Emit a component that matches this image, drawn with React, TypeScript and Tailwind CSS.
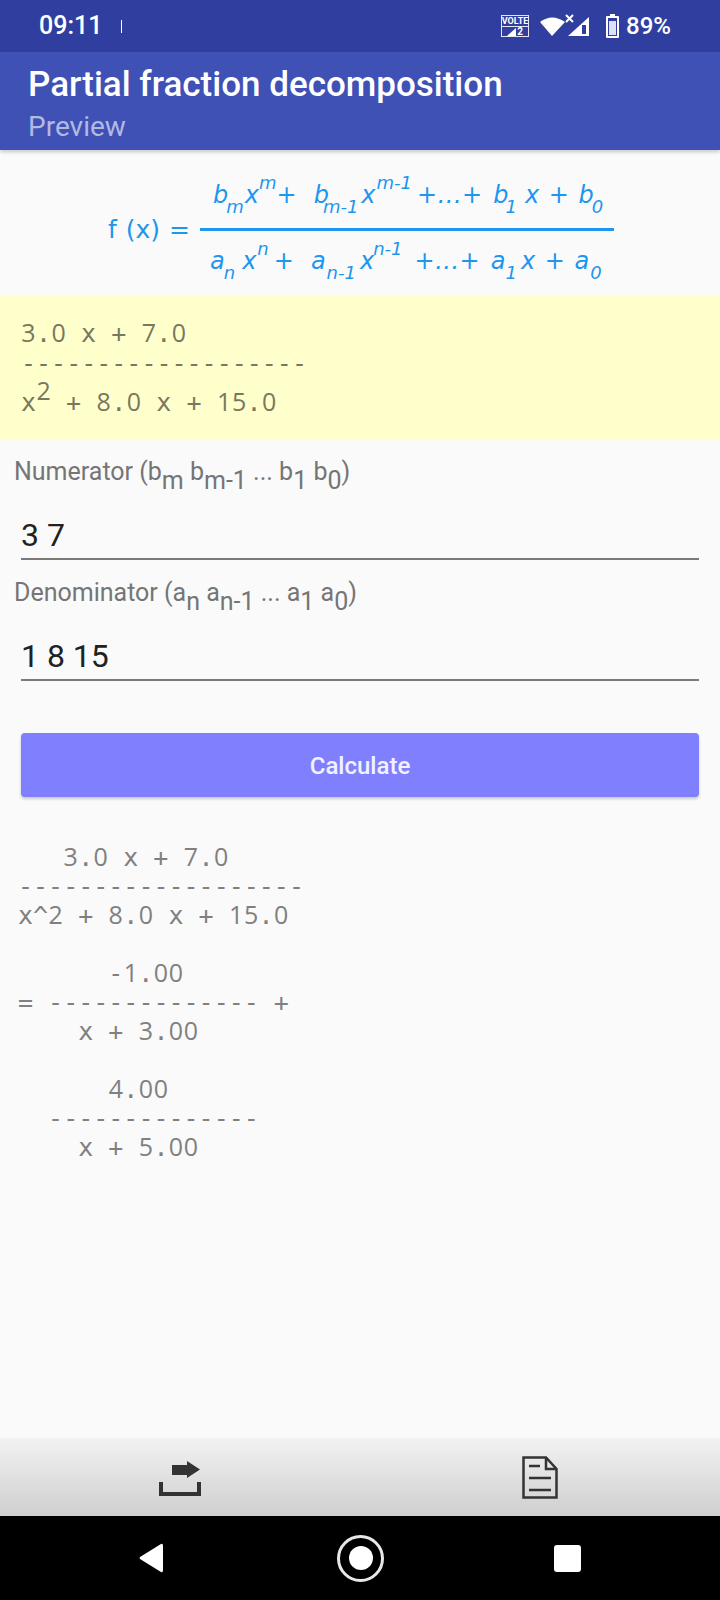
import React from "react";

const mono = "font-['DejaVu_Sans_Mono',monospace] text-[25px] leading-[29px] whitespace-pre";
const roboto = "font-['Roboto',sans-serif]";

const result = [
    "   3.0 x + 7.0",
    "-------------------",
    "x^2 + 8.0 x + 15.0",
    "",
    "      -1.00",
    "= -------------- +",
    "    x + 3.00",
    "",
    "      4.00",
    "  --------------",
    "    x + 5.00",
];

// цифры в ячейке 15px, у моноширинного шрифта ноль с точкой
const Digits = ({ text }: { text: string }) => (
    <>
        {text.split(/([0-9])/).map((part, i) =>
            /[0-9]/.test(part) ? (
                <span key={i} className="inline-block w-[15px] text-center leading-none font-['Open_Sans',sans-serif]">{part}</span>
            ) : (
                part
            )
        )}
    </>
);

const Sub = ({ children, className = "" }: { children: React.ReactNode; className?: string }) => (
    <span className={`relative top-[10px] text-[18px] ${className}`}>{children}</span>
);

const Sup = ({ children, className = "" }: { children: React.ReactNode; className?: string }) => (
    <span className={`relative -top-[14px] text-[18px] ${className}`}>{children}</span>
);

const Formula = () => (
    <div className="h-[145px] flex items-start pt-[27px] pl-[108px] text-[#1d96ee] font-['DejaVu_Sans',sans-serif]">
        <div className="w-[92px] mt-[35px] text-[25px] leading-[36px] whitespace-pre [word-spacing:1px]">f (x) =</div>
        <div className="w-[414px] flex flex-col">
            <div className="h-[36px] pl-[13px] text-[24px] italic leading-[36px] whitespace-pre [word-spacing:2px]">
                b<Sub className="ml-[-2px]">m</Sub>
                <span className="ml-[1px]">x</span><Sup>m</Sup>
                +
                <span className="ml-[17px]">b</span><Sub className="ml-[-6px]">m-1</Sub>
                <span className="ml-[3px]">x</span><Sup className="ml-[1px]">m-1</Sup>
                <span className="ml-[5px] tracking-[0.5px]">+...+</span><span className="ml-[1px]"> b</span><Sub className="ml-[-3px]">1</Sub>
                <span className="ml-[8px]">x + b</span><Sub className="ml-[-2px]">0</Sub>
            </div>
            <div className="h-[3px] mt-[15px] bg-[#1d96ee]" />
            <div className="h-[36px] mt-[12px] pl-[10px] text-[24px] italic leading-[36px] whitespace-pre [word-spacing:2px]">
                a<Sub className="ml-[-1px]">n</Sub>
                <span className="ml-[7px]">x</span><Sup className="ml-[1px]">n</Sup>
                <span className="ml-[5px]">+</span>
                <span className="ml-[17px]">a</span><Sub className="ml-[1px]">n-1</Sub>
                <span className="ml-[4px]">x</span><Sup className="ml-[-1px]">n-1</Sup>
                <span className="ml-[12px] tracking-[0.5px]">+...+</span><span className="ml-[1px]"> a</span><Sub>1</Sub>
                <span className="ml-[4px]">x + a</span><Sub className="ml-[1px]">0</Sub>
            </div>
        </div>
    </div>
);

const Idx = ({ children }: { children: React.ReactNode }) => (
    <span className="relative top-[9px]">{children}</span>
);

const Field = ({ label, value }: { label: React.ReactNode; value: string }) => (
    <div>
        <div className={`${roboto} h-[63px] pl-[14px] text-[25px] leading-[36px] text-[#757575] whitespace-pre`}>{label}</div>
        <div className={`${roboto} mx-[21px] h-[43px] border-b-2 border-[#7a7a7a] text-[32px] leading-[36px] text-[#212121] whitespace-pre`}>{value}</div>
    </div>
);

const StatusIcons = () => (
    <div className="flex items-center">
        <div className="w-[28px] h-[22px] border border-[#e4e6f5] flex flex-col items-center">
            <span className="font-['Roboto',sans-serif] font-bold text-[9px] leading-[10px] text-white">VOLTE</span>
            <div className="w-full h-[11px] border-t border-[#e4e6f5] flex items-center justify-center gap-[1px]">
                <svg width="9" height="8" viewBox="0 0 9 8"><path d="M0 8 L9 0 V8 Z" fill="#fff" /></svg>
                <span className="font-['Roboto',sans-serif] font-bold text-[10px] leading-[10px] text-white">2</span>
            </div>
        </div>
        <svg className="ml-[10px]" width="51" height="24" viewBox="0 0 51 24">
            <path d="M1 8 Q13 -1 26 8 L13 22 Z" fill="#fff" />
            <path d="M27 1 L34 8 M34 1 L27 8" stroke="#fff" strokeWidth="2" />
            <path d="M29 22 L50 3 V22 Z" fill="#fff" />
            <path d="M43 11 H47 V20 H43 Z" fill="#303f9f" />
        </svg>
        <svg className="ml-[16px]" width="13" height="24" viewBox="0 0 13 24">
            <path d="M4 0 H9 V2 H12 Q13 2 13 3 V23 Q13 24 12 24 H1 Q0 24 0 23 V3 Q0 2 1 2 H4 Z" fill="#fff" />
            <rect x="2" y="4" width="9" height="18" fill="#303f9f" />
            <rect x="3" y="7" width="7" height="14" fill="#dfe2f3" />
        </svg>
        <span className={`${roboto} ml-[7px] text-[24px] font-medium text-white`}>89%</span>
    </div>
);

export default function App() {
    return (
        <div className="w-[720px] h-[1600px] flex flex-col bg-[#fafafa] overflow-hidden">
            <div className="h-[52px] shrink-0 bg-[#303f9f] flex items-center justify-between pl-[39px] pr-[49px]">
                <div className="flex items-center">
                    <span className={`${roboto} text-[25px] font-medium text-white`}>09:11</span>
                    <div className="ml-[19px] w-px h-[13px] bg-white" />
                </div>
                <StatusIcons />
            </div>

            <div className="relative h-[98px] shrink-0 bg-[#3f51b5] pl-[28px] pt-[11px] shadow-[0_2px_4px_rgba(0,0,0,0.2)]">
                <div className={`${roboto} text-[35px] leading-[44px] font-medium text-white`}>Partial fraction decomposition</div>
                <div className={`${roboto} mt-[2px] text-[28px] leading-[36px] text-[#b2b9e2]`}>Preview</div>
            </div>

            <Formula />

            <div className="h-[144px] shrink-0 bg-[#ffffcc] pl-[21px] pt-[24px] text-[#787860]">
                <div className={mono}><Digits text="3.0 x + 7.0" /></div>
                <div className={`${mono} mt-[1px]`}>-------------------</div>
                <div className={`${mono} mt-[10px]`}>x<span className="relative -top-[11px]"><Digits text="2" /></span><Digits text=" + 8.0 x + 15.0" /></div>
            </div>

            <div className="pt-[15px]">
                <Field
                    label={<>Numerator (b<Idx>m</Idx> b<Idx>m-1</Idx> ... b<Idx>1</Idx> b<Idx>0</Idx>)</>}
                    value="3 7"
                />
                <div className="h-[15px]" />
                <Field
                    label={<>Denominator (a<Idx>n</Idx> a<Idx>n-1</Idx> ... a<Idx>1</Idx> a<Idx>0</Idx>)</>}
                    value="1 8 15"
                />
            </div>

            <button className={`${roboto} mx-[21px] mt-[52px] h-[64px] shrink-0 pt-[2px] rounded-[4px] bg-[#8080ff] text-[24px] font-medium text-[#f2f2ff] shadow-[0_2px_3px_rgba(0,0,0,0.2)]`}>
                Calculate
            </button>

            <div className="pl-[18px] pt-[46px] text-[#808080] flex-1">
                {result.map((line, i) => (
                    <div key={i} className={`${mono} h-[29px]`}><Digits text={line} /></div>
                ))}
            </div>

            <div className="h-[78px] shrink-0 bg-gradient-to-b from-[#f2f2f2] to-[#cfcfcf] flex">
                <div className="w-[360px] flex items-center justify-center">
                    <svg className="mt-[4px]" width="42" height="36" viewBox="0 0 42 36">
                        <path d="M13 4 H28 V0 L41 8.5 L28 17 V14 H13 Z" fill="#333" />
                        <path d="M2 21 V33 H40 V21" fill="none" stroke="#333" strokeWidth="4" />
                    </svg>
                </div>
                <div className="w-[360px] flex items-center justify-center">
                    <svg width="36" height="43" viewBox="0 0 36 43">
                        <path d="M1.5 1.5 H24 L34.5 13 V41.5 H1.5 Z" fill="none" stroke="#333" strokeWidth="2.5" />
                        <path d="M24 1.5 V13 H34.5" fill="none" stroke="#333" strokeWidth="2.5" />
                        <path d="M7 10 H18 M7 22 H29 M7 34 H29" stroke="#333" strokeWidth="2.5" />
                    </svg>
                </div>
            </div>

            <div className="h-[84px] shrink-0 bg-black flex items-center">
                <svg className="ml-[139px]" width="24" height="30" viewBox="0 0 24 30">
                    <path d="M22 1 Q24 0 24 3 V27 Q24 30 22 29 L1 16 Q0 15 1 14 Z" fill="#fff" />
                </svg>
                <div className="ml-[174px] w-[47px] h-[47px] rounded-full border-[3px] border-[#e8e8e8] flex items-center justify-center">
                    <div className="w-[24px] h-[24px] rounded-full bg-white" />
                </div>
                <div className="ml-[170px] w-[27px] h-[27px] rounded-[3px] bg-white" />
            </div>
        </div>
    );
}
